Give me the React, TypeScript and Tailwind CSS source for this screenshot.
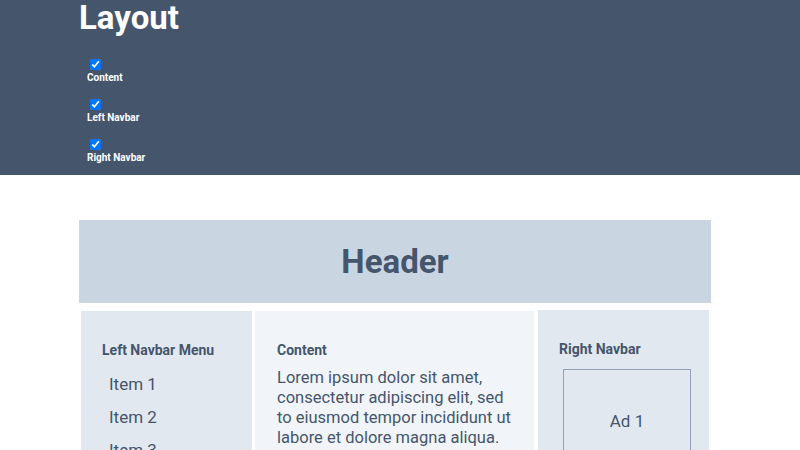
import React, { useState } from "react";

const font = { fontFamily: "Roboto, 'Noto Sans', sans-serif" };

type Key = "content" | "left" | "right";

const OPTIONS: { key: Key; label: string }[] = [
  { key: "content", label: "Content" },
  { key: "left", label: "Left Navbar" },
  { key: "right", label: "Right Navbar" },
];

export default function App() {
  const [show, setShow] = useState({ content: true, left: true, right: true });

  const toggle = (key: Key) => setShow((s) => ({ ...s, [key]: !s[key] }));

  return (
    <div className="h-[450px] overflow-y-scroll bg-white text-slate-600" style={font}>
      <div className="min-h-[780px]">
        {/* controls */}
        <div className="bg-slate-600 h-[175px]">
          <div className="w-[632px] ml-[79px]">
            <h1 className="text-[33px] leading-[35px] font-bold text-white">Layout</h1>
            <div className="pt-[24px] pl-[8px] flex flex-col gap-[15px] text-white text-[10px] font-bold leading-[12px]">
              {OPTIONS.map((o) => (
                <label key={o.key} className="block">
                  <input
                    type="checkbox"
                    className="block m-0 ml-[3px] w-[11px] h-[11px]"
                    checked={show[o.key]}
                    onChange={() => toggle(o.key)}
                  />
                  <span className="block mt-[2px]">{o.label}</span>
                </label>
              ))}
            </div>
          </div>
        </div>

        {/* preview */}
        <div className="w-[632px] ml-[79px] pt-[45px]">
          <div className="bg-slate-300 h-[83px] flex items-center justify-center">
            <h2 className="text-[33px] font-bold text-slate-600">Header</h2>
          </div>
          <div className="flex pl-[2px] mt-[8px]">
            {show.left && (
              <div className="w-[171px] shrink-0 bg-slate-200 h-[300px] pl-[21px] pt-[30px]">
                <h3 className="text-[14px] font-bold leading-[18px]">Left Navbar Menu</h3>
                <ul className="pl-[7px] mt-[15px] flex flex-col gap-[13px] text-[17px] leading-[20px]">
                  <li>Item 1</li>
                  <li>Item 2</li>
                  <li>Item 3</li>
                </ul>
              </div>
            )}
            {show.content && (
              <div className="w-[279px] ml-[3px] shrink-0 bg-slate-100 h-[300px] pl-[22px] pr-[14px] pt-[30px]">
                <h3 className="text-[14px] font-bold leading-[18px]">Content</h3>
                <p className="mt-[9px] text-[16.5px] leading-[20px]">
                  Lorem ipsum dolor sit amet, consectetur adipiscing elit, sed to eiusmod tempor incididunt ut labore et dolore magna aliqua.
                </p>
              </div>
            )}
            {show.right && (
              <div className="w-[171px] ml-[4px] shrink-0 bg-slate-200 h-[300px] pl-[21px] pr-[18px] pt-[30px] -mt-[1px]">
                <h3 className="text-[14px] font-bold leading-[18px]">Right Navbar</h3>
                <div className="mt-[11px] ml-[4px] border border-slate-400 h-[150px] pt-[41px] text-center text-[17px] leading-[20px]">
                  Ad 1
                </div>
              </div>
            )}
          </div>
        </div>
      </div>
    </div>
  );
}
